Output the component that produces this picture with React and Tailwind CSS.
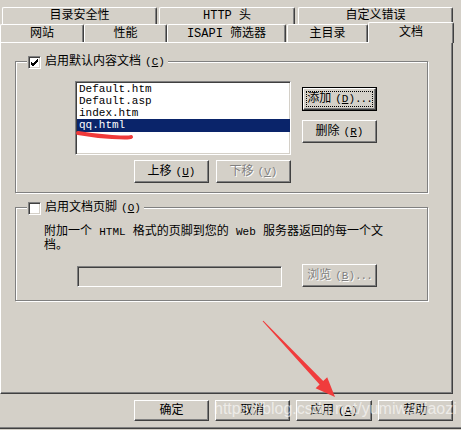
import React from 'react';

const raised = 'border border-t-white border-l-white border-r-[#404040] border-b-[#404040] shadow-[inset_-1px_-1px_0_#808080]';
const sunken = 'border border-t-[#808080] border-l-[#808080] border-r-white border-b-white shadow-[inset_1px_1px_0_#404040,inset_-1px_-1px_0_#d4d0c8]';
const etched = 'border border-[#808080] shadow-[1px_1px_0_#fff,inset_1px_1px_0_#fff]';
const tab = 'flex items-center justify-center border-t border-l border-r border-t-white border-l-white border-r-[#404040] rounded-t-[2px] shadow-[inset_-1px_0_0_#808080]';

function Checkbox({ checked }) {
  return (
    <div className={`w-[13px] h-[13px] bg-white ${sunken} flex items-center justify-center`}>
      {checked && (
        <svg width="9" height="9" viewBox="0 0 9 9">
          <path d="M1 4 L3 6 L8 1 M1 5 L3 7 L8 2 M1 6 L3 8 L8 3" stroke="#000" strokeWidth="1" fill="none" />
        </svg>
      )}
    </div>
  );
}

function Key({ k }) {
  return <span className="text-[11px] ml-[4px]">(<u>{k}</u>)</span>;
}

export default function App() {
  return (
    <div className="relative w-[461px] h-[430px] bg-[#d4d0c8] overflow-hidden text-black text-[12px] leading-[14px] font-['Liberation_Mono','Noto_Sans_CJK_SC',monospace]">
      {/* Tabs, back row */}
      <div className="flex mt-[7px] h-[17px] pl-[2px]">
        <div className={`${tab} w-[155px]`}>目录安全性</div>
        <div className={`${tab} w-[136px] ml-[2px]`}>HTTP 头</div>
        <div className={`${tab} w-[155px] ml-[3px]`}>自定义错误</div>
      </div>
      {/* Tabs, front row */}
      <div className="flex h-[18px]">
        <div className={`${tab} w-[84px]`}>网站</div>
        <div className={`${tab} w-[83px]`}>性能</div>
        <div className={`${tab} w-[119px]`}>ISAPI 筛选器</div>
        <div className={`${tab} w-[81px] ml-[1px]`}>主目录</div>
        <div className={`${tab} relative z-10 w-[86px] h-[21px] -mt-[2px] bg-[#d4d0c8] items-start pt-[3px]`}>文档</div>
      </div>

      {/* Page */}
      <div className="w-[453px] h-[352px] border-t border-l border-r border-b border-t-white border-l-white border-r-[#404040] border-b-[#404040] shadow-[inset_-1px_-1px_0_#808080] pl-[14px] pt-[18px]">
        {/* Default documents */}
        <div className={`relative w-[413px] h-[132px] ${etched}`}>
          <div className="absolute -top-[6px] left-[11px] flex items-center gap-[4px] bg-[#d4d0c8] pl-[1px] pr-[3px]">
            <Checkbox checked />
            <span className="leading-[13px]">启用默认内容文档<Key k="C" /></span>
          </div>
          <div className="flex pl-[59px] pt-[19px]">
            <div className="w-[216px]">
              <div className={`h-[74px] bg-white ${sunken} pt-[1px] pl-[1px] text-[11px] leading-[12px]`}>
                <div className="h-[12px] pl-[2px]">Default.htm</div>
                <div className="h-[12px] pl-[2px]">Default.asp</div>
                <div className="h-[12px] pl-[2px]">index.htm</div>
                <div className="h-[13px] pl-[2px] bg-[#0a246a] text-white leading-[13px]">qq.html</div>
              </div>
              <div className="flex gap-[7px] ml-[59px] mt-[5px]">
                <button className={`w-[75px] h-[23px] ${raised} flex items-center justify-center whitespace-nowrap`}>上移<Key k="U" /></button>
                <button className={`w-[75px] h-[23px] ${raised} flex items-center justify-center whitespace-nowrap text-[#808080] [text-shadow:1px_1px_0_#fff]`}>下移<Key k="V" /></button>
              </div>
            </div>
            <div className="ml-[11px] pt-[6px] flex flex-col gap-[9px]">
              <button className="w-[75px] h-[24px] border border-black">
                <div className={`w-full h-full ${raised} p-[2px]`}>
                  <div className="w-full h-full border border-dotted border-black flex items-center justify-center whitespace-nowrap">
                    添加<Key k="D" /><span className="text-[11px] tracking-[-1px]">...</span>
                  </div>
                </div>
              </button>
              <button className={`w-[75px] h-[23px] ${raised} flex items-center justify-center whitespace-nowrap`}>删除<Key k="R" /></button>
            </div>
          </div>
        </div>

        {/* Footer */}
        <div className={`relative w-[413px] h-[94px] mt-[14px] ${etched}`}>
          <div className="absolute -top-[6px] left-[11px] flex items-center gap-[4px] bg-[#d4d0c8] pl-[1px] pr-[3px]">
            <Checkbox />
            <span className="leading-[13px]">启用文档页脚<Key k="O" /></span>
          </div>
          <div className="pl-[28px] pt-[17px] whitespace-nowrap">
            附加一个 <span className="text-[11px]">HTML</span> 格式的页脚到您的 <span className="text-[11px]">Web</span> 服务器返回的每一个文
            <br />
            档。
          </div>
          <div className="flex items-end pl-[61px] mt-[11px]">
            <div className={`w-[205px] h-[21px] ${sunken}`} />
            <button className={`ml-[20px] w-[75px] h-[23px] ${raised} flex items-center justify-center whitespace-nowrap text-[#808080] [text-shadow:1px_1px_0_#fff]`}>
              浏览<Key k="B" /><span className="text-[11px] tracking-[-1px]">...</span>
            </button>
          </div>
        </div>
      </div>

      {/* Dialog buttons */}
      <div className="flex justify-end gap-[6px] pr-[8px] mt-[6px]">
        <button className={`w-[75px] h-[21px] ${raised} flex items-center justify-center`}>确定</button>
        <button className={`w-[75px] h-[21px] ${raised} flex items-center justify-center`}>取消</button>
        <button className={`w-[76px] h-[21px] ${raised} flex items-center justify-center whitespace-nowrap`}>应用<Key k="A" /></button>
        <button className={`w-[75px] h-[21px] ${raised} flex items-center justify-center`}>帮助</button>
      </div>
      <div className="mt-[6px] h-[2px] border-t border-t-[#808080] border-b border-b-[#404040]" />

      {/* Watermark */}
      <div className="absolute left-[214px] top-[399px] text-[16px] leading-[20px] text-white/60 font-['Liberation_Sans',sans-serif] whitespace-nowrap pointer-events-none">
        https://blog.csdn.net/yumiwoxiaozi
      </div>

      {/* Red annotations */}
      <svg className="absolute inset-0 pointer-events-none" width="461" height="430" viewBox="0 0 461 430">
        <path d="M78 133 Q95 136 112 137 T131 137" stroke="#f03a3a" strokeWidth="4" strokeLinecap="round" fill="none" />
        <polygon points="262.6,321.3 319.6,384.4 315.6,388.2 335,397 327.2,377.2 323.2,381 263.4,320.7" fill="#f03c3c" />
      </svg>
    </div>
  );
}
